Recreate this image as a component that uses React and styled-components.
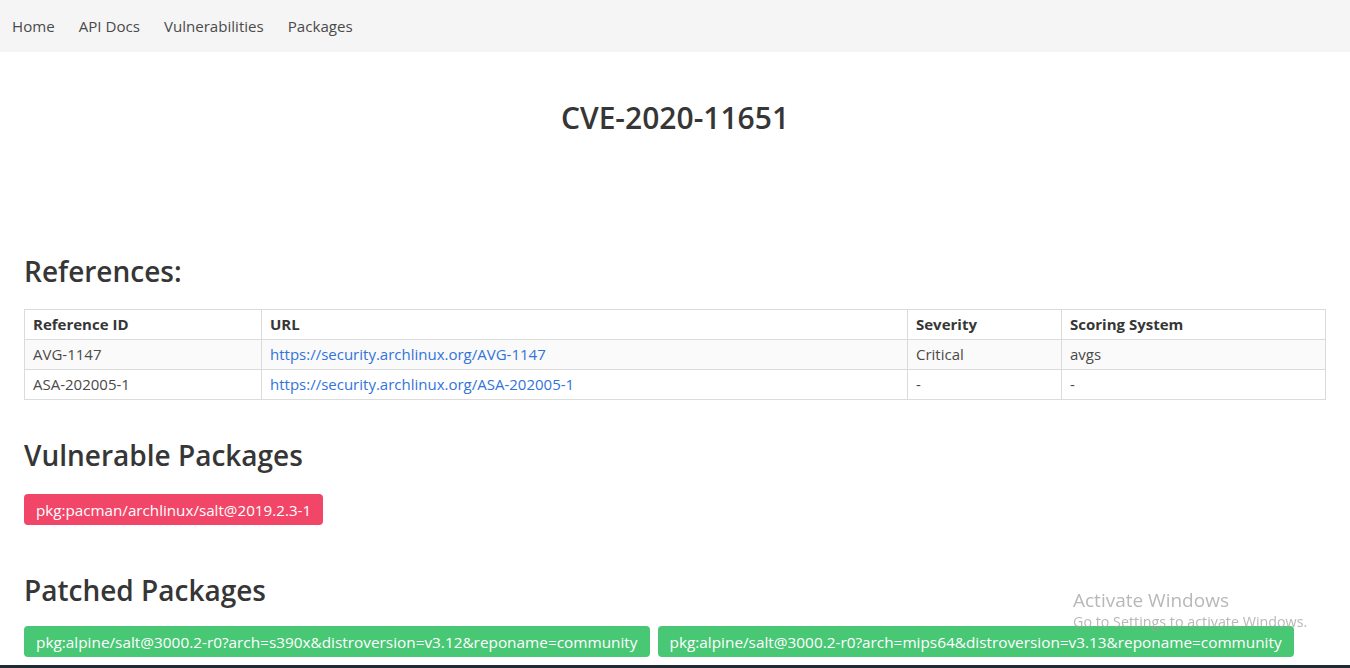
import React from 'react';
import styled, { createGlobalStyle } from 'styled-components';

const GlobalStyle = createGlobalStyle`
  html, body {
    margin: 0;
    padding: 0;
    background: #fff;
  }
  body {
    font-family: "Segoe UI", "Open Sans", "Noto Sans", sans-serif;
    color: #4a4a4a;
    font-size: 16px;
  }
  * { box-sizing: border-box; }
`;

const references = [
  { id: 'AVG-1147', url: 'https://security.archlinux.org/AVG-1147', severity: 'Critical', system: 'avgs' },
  { id: 'ASA-202005-1', url: 'https://security.archlinux.org/ASA-202005-1', severity: '-', system: '-' },
];

const vulnerable = ['pkg:pacman/archlinux/salt@2019.2.3-1'];

const patched = [
  'pkg:alpine/salt@3000.2-r0?arch=s390x&distroversion=v3.12&reponame=community',
  'pkg:alpine/salt@3000.2-r0?arch=mips64&distroversion=v3.13&reponame=community',
  'pkg:alpine/salt@3000.2-r0?arch=aarch64&distroversion=v3.12&reponame=community',
  'pkg:alpine/salt@3000.2-r0?arch=x86_64&distroversion=v3.13&reponame=community',
  'pkg:alpine/salt@3000.2-r0?arch=armhf&distroversion=v3.12&reponame=community',
  'pkg:alpine/salt@3000.2-r0?arch=ppc64le&distroversion=v3.13&reponame=community',
];

export default function App() {
  return (
    <>
      <GlobalStyle />
      <Navbar>
        <NavItem href="#">Home</NavItem>
        <NavItem href="#">API Docs</NavItem>
        <NavItem href="#">Vulnerabilities</NavItem>
        <NavItem href="#">Packages</NavItem>
      </Navbar>
      <Main>
        <Title>CVE-2020-11651</Title>

        <Heading $top={119}>References:</Heading>
        <Table>
          <colgroup>
            <col style={{ width: 237 }} />
            <col style={{ width: 646 }} />
            <col style={{ width: 154 }} />
            <col />
          </colgroup>
          <thead>
            <tr>
              <Th>Reference ID</Th>
              <Th>URL</Th>
              <Th>Severity</Th>
              <Th>Scoring System</Th>
            </tr>
          </thead>
          <tbody>
            {references.map((r, i) => (
              <Row key={r.id} $striped={i % 2 === 0}>
                <Td>{r.id}</Td>
                <Td><Link href={r.url}>{r.url}</Link></Td>
                <Td>{r.severity}</Td>
                <Td>{r.system}</Td>
              </Row>
            ))}
          </tbody>
        </Table>

        <Heading $top={38}>Vulnerable Packages</Heading>
        <Tags $top={22}>
          {vulnerable.map((p) => (
            <Tag key={p} $kind="danger">{p}</Tag>
          ))}
        </Tags>

        <Heading $top={48}>Patched Packages</Heading>
        <Tags $top={19}>
          {patched.map((p) => (
            <Tag key={p} $kind="success" $size={15.35}>{p}</Tag>
          ))}
        </Tags>
      </Main>

      <Watermark>
        <WatermarkTitle>Activate Windows</WatermarkTitle>
        <WatermarkText>Go to Settings to activate Windows.</WatermarkText>
      </Watermark>
      <Taskbar />
    </>
  );
}

const Navbar = styled.nav`
  display: flex;
  align-items: stretch;
  height: 52px;
  background: #f5f5f5;
`;

const NavItem = styled.a`
  display: flex;
  align-items: center;
  padding: 0 12px;
  color: #4a4a4a;
  text-decoration: none;
  font-size: 15.1px;
`;

const Main = styled.main`
  padding: 0 24px 40px;
`;

const Title = styled.h1`
  margin: 49px 0 0;
  text-align: center;
  font-size: 30px;
  line-height: 34px;
  font-weight: 600;
  color: #363636;
`;

const Heading = styled.h2`
  margin: ${(p) => p.$top}px 0 0;
  font-size: 28px;
  line-height: 34px;
  font-weight: 600;
  color: #363636;
`;

const Table = styled.table`
  margin-top: 21px;
  width: 100%;
  table-layout: fixed;
  border-collapse: collapse;
  font-size: 15px;
`;

const Th = styled.th`
  text-align: left;
  padding: 4px 8px;
  line-height: 21px;
  border: 1px solid #dbdbdb;
  color: #363636;
  font-weight: 700;
`;

const Row = styled.tr`
  background: ${(p) => (p.$striped ? '#fafafa' : '#fff')};
`;

const Td = styled.td`
  padding: 4px 8px;
  line-height: 21px;
  border: 1px solid #dbdbdb;
  color: #4a4a4a;
  white-space: nowrap;
`;

const Link = styled.a`
  color: #3273dc;
  text-decoration: none;
`;

const Tags = styled.div`
  display: flex;
  flex-wrap: wrap;
  gap: 8px;
  margin-top: ${(p) => p.$top}px;
`;

const Tag = styled.span`
  display: inline-flex;
  align-items: center;
  height: 31px;
  padding: 0 12px;
  border-radius: 4px;
  color: #fff;
  font-size: ${(p) => p.$size || 15.2}px;
  white-space: nowrap;
  background: ${(p) => (p.$kind === 'danger' ? '#f14668' : '#48c774')};
`;

const Watermark = styled.div`
  position: fixed;
  left: 1073px;
  top: 588px;
  pointer-events: none;
  color: rgba(160, 160, 160, 0.75);
`;

const WatermarkTitle = styled.div`
  font-size: 19px;
  line-height: 24px;
`;

const WatermarkText = styled.div`
  font-size: 14.3px;
  line-height: 20px;
`;

const Taskbar = styled.div`
  position: fixed;
  left: 0;
  right: 0;
  bottom: 0;
  height: 3px;
  background: #1f2b33;
`;
